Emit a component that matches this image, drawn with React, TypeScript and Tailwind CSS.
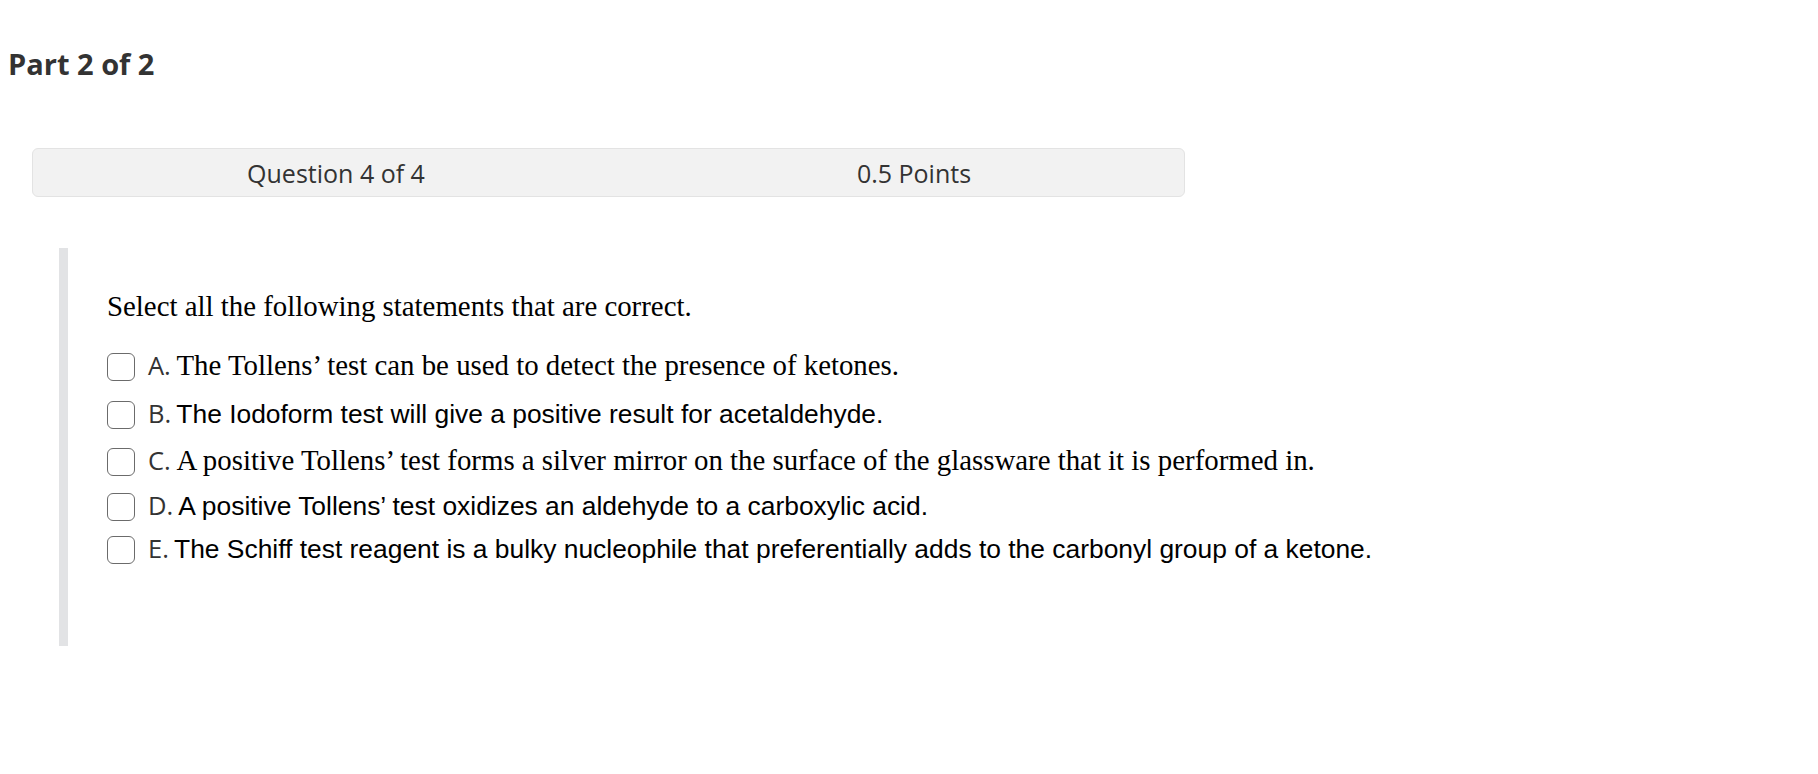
import React from 'react';

type Choice = {
  label: string;
  text: string;
  serif: boolean;
  rowClass: string;
};

const CHOICES: Choice[] = [
  { label: 'A.', text: 'The Tollens’ test can be used to detect the presence of ketones.', serif: true, rowClass: 'h-[48px]' },
  { label: 'B.', text: 'The Iodoform test will give a positive result for acetaldehyde.', serif: false, rowClass: 'h-[47px]' },
  { label: 'C.', text: 'A positive Tollens’ test forms a silver mirror on the surface of the glassware that it is performed in.', serif: true, rowClass: 'h-[47px]' },
  { label: 'D.', text: 'A positive Tollens’ test oxidizes an aldehyde to a carboxylic acid.', serif: false, rowClass: 'h-[43px]' },
  { label: 'E.', text: 'The Schiff test reagent is a bulky nucleophile that preferentially adds to the carbonyl group of a ketone.', serif: false, rowClass: 'h-[43px]' },
];

function ChoiceRow({ choice }: { choice: Choice }) {
  const [checked, setChecked] = React.useState(false);

  return (
    <label className={`flex items-center cursor-pointer ${choice.rowClass}`}>
      <span
        onClick={() => setChecked(!checked)}
        className={`w-[28px] h-[28px] shrink-0 rounded-[6px] border-[1.5px] border-[#6b6b6b] ${checked ? 'bg-[#0a64d6]' : 'bg-white'}`}
      />
      <span className="ml-[13px] whitespace-nowrap leading-[32px]">
        <span className="text-[25.5px] text-[#333333] font-['Open_Sans',sans-serif]">{choice.label}</span>{' '}
        {choice.serif ? (
          <span className="ml-[1.5px] text-[28.85px] text-black font-['Liberation_Serif','Times_New_Roman',serif]">{choice.text}</span>
        ) : (
          <span className="ml-[1px] text-[26.4px] text-black font-['Liberation_Sans',Arial,sans-serif]">{choice.text}</span>
        )}
      </span>
    </label>
  );
}

export default function App() {
  return (
    <div className="w-[1818px] h-[774px] bg-white font-['Open_Sans',sans-serif] text-[#333333] overflow-hidden">
      {/* Part heading */}
      <h2 className="pt-[45px] pl-[8px] text-[29px] leading-[38px] font-bold text-[#333333]">Part 2 of 2</h2>

      {/* Question meta bar */}
      <div className="mt-[65px] ml-[32px] w-[1153px] h-[49px] flex items-center bg-[#f2f2f2] border border-[#e3e3e3] rounded-[6px]">
        <div className="grid grid-cols-[578px_578px] pl-[14px] text-[25px] leading-[32px] text-[#333333]">
          <div className="text-center">Question 4 of 4</div>
          <div className="text-center">0.5 Points</div>
        </div>
      </div>

      {/* Question body */}
      <div className="mt-[51px] ml-[59px] h-[398px] border-l-[9px] border-[#e2e3e5] pl-[39px] pt-[42px]">
        <p className="text-[28.85px] leading-[32px] text-black font-['Liberation_Serif','Times_New_Roman',serif]">
          Select all the following statements that are correct.
        </p>
        <div className="mt-[21px] flex flex-col">
          {CHOICES.map((c) => (
            <ChoiceRow key={c.label} choice={c} />
          ))}
        </div>
      </div>
    </div>
  );
}
